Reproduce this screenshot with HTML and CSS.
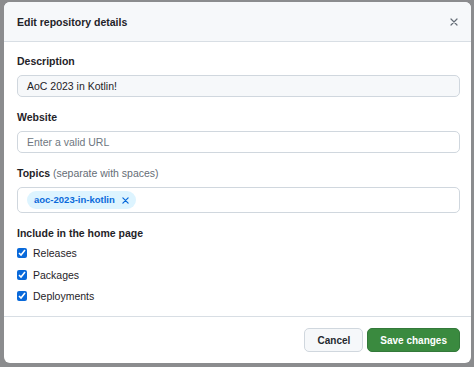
FILE: index.html
```html
<!DOCTYPE html>
<html lang="en">
<head>
  <meta charset="UTF-8">
  <title>Edit repository details</title>
  <link rel="stylesheet" href="styles.css">
</head>
<body>
  <div class="backdrop">
    <div class="dialog">
      <div class="dialog-header">
        <h1>Edit repository details</h1>
        <button class="close" aria-label="Close">
          <svg width="8" height="8" viewBox="0 0 8 8"><path d="M1 1L7 7M7 1L1 7" stroke="#656d76" stroke-width="1.2" stroke-linecap="round"/></svg>
        </button>
      </div>

      <div class="dialog-body">
        <div class="field">
          <label>Description</label>
          <div class="input filled">AoC 2023 in Kotlin!</div>
        </div>

        <div class="field">
          <label>Website</label>
          <div class="input placeholder">Enter a valid URL</div>
        </div>

        <div class="field">
          <label>Topics <span class="note">(separate with spaces)</span></label>
          <div class="input topics">
            <span class="topic">aoc-2023-in-kotlin
              <svg width="7" height="7" viewBox="0 0 8 8"><path d="M1 1L7 7M7 1L1 7" stroke="#0969da" stroke-width="1.4" stroke-linecap="round"/></svg>
            </span>
          </div>
        </div>

        <div class="field">
          <label>Include in the home page</label>
          <div class="checks">
            <label class="check"><input type="checkbox" checked> Releases</label>
            <label class="check"><input type="checkbox" checked> Packages</label>
            <label class="check"><input type="checkbox" checked> Deployments</label>
          </div>
        </div>
      </div>

      <div class="dialog-footer">
        <button class="btn">Cancel</button>
        <button class="btn btn-primary">Save changes</button>
      </div>
    </div>
  </div>
</body>
</html>
```

FILE: styles.css
```css
html,
body {
  margin: 0;
  padding: 0;
}

body {
  font-family: "Liberation Sans", Arial, sans-serif;
  color: #1f2328;
  background: #8b8c8e;
  width: 474px;
  height: 367px;
  overflow: hidden;
}

.backdrop {
  padding: 2px 3px 0 4px;
}

.dialog {
  width: 467px;
  height: 361px;
  background: #fff;
  border-radius: 6px;
  overflow: hidden;
  display: flex;
  flex-direction: column;
}

.dialog-header {
  height: 39px;
  flex: none;
  background: #f6f8fa;
  border-bottom: 1px solid #d8dee4;
  display: flex;
  align-items: center;
  justify-content: space-between;
  padding: 0 13px;
}

.dialog-header h1 {
  font-size: 10.5px;
  font-weight: 700;
  margin: 0;
}

.close {
  border: 0;
  background: none;
  padding: 0;
  display: flex;
}

.dialog-body {
  flex: 1;
  padding: 12px 11px 0 13px;
  display: flex;
  flex-direction: column;
  gap: 13px;
}

.field > label {
  display: block;
  font-size: 10.5px;
  font-weight: 700;
  line-height: 14px;
  margin-bottom: 7px;
}

.note {
  font-weight: 400;
  color: #656d76;
}

.input {
  height: 20px;
  border: 1px solid #d0d7de;
  border-radius: 5px;
  font-size: 10.5px;
  line-height: 20px;
  padding: 0 9px;
}

.input.filled {
  background: #f6f8fa;
}

.input.placeholder {
  color: #6e7781;
}

.input.topics {
  height: 24px;
  display: flex;
  align-items: center;
}

.topic {
  display: inline-flex;
  align-items: center;
  gap: 7px;
  height: 18px;
  padding: 0 7px;
  border-radius: 9px;
  background: #ddf4ff;
  color: #0969da;
  font-size: 9.5px;
  font-weight: 700;
  line-height: 18px;
}

.checks {
  display: flex;
  flex-direction: column;
  gap: 7.5px;
  margin-top: -1px;
}

.check {
  display: flex;
  align-items: center;
  gap: 6px;
  font-size: 10.5px;
  line-height: 14px;
}

.check input {
  width: 10px;
  height: 10px;
  margin: 0;
  accent-color: #0969da;
}

.dialog-footer {
  height: 46px;
  flex: none;
  border-top: 1px solid #d8dee4;
  display: flex;
  align-items: center;
  justify-content: flex-end;
  gap: 4px;
  padding: 0 11px;
}

.btn {
  height: 24px;
  padding: 0 12px;
  border: 1px solid #d0d7de;
  border-radius: 5px;
  background: #f6f8fa;
  color: #24292f;
  font-family: inherit;
  font-size: 10px;
  font-weight: 700;
}

.btn-primary {
  background: #3a8a3f;
  border-color: #33793a;
  color: #fff;
  padding: 0 12px;
}
```
